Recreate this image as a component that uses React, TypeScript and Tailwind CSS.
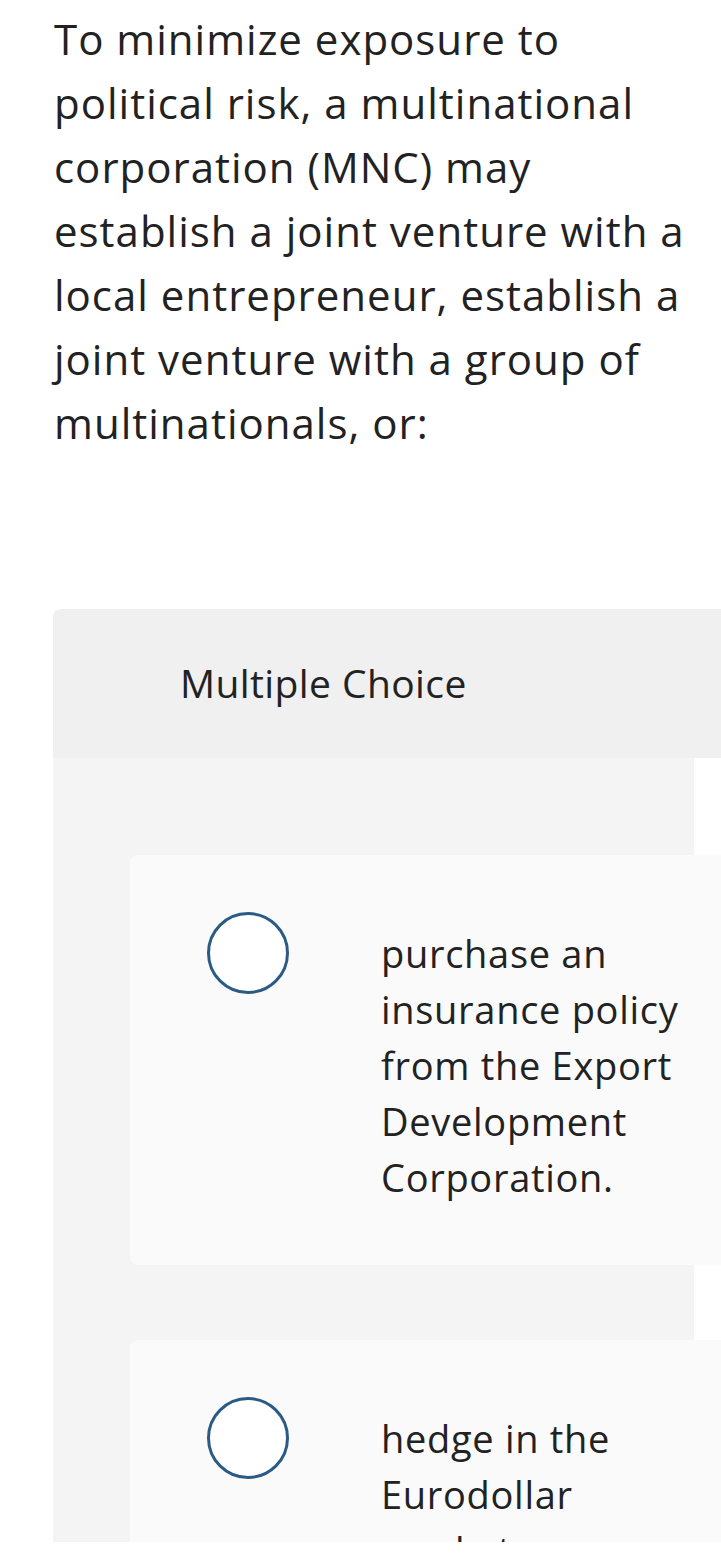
import React from 'react';

const font = { fontFamily: '"Open Sans", "Noto Sans", sans-serif' };

function Radio() {
  return (
    <div className="mt-[-3px] h-[82px] w-[82px] shrink-0 rounded-full border-[3px] border-[#2b5a84] bg-white" />
  );
}

function Option({ text }: { text: string }) {
  return (
    <div className="flex w-[640px] rounded-tl-lg rounded-bl-lg bg-[#fafafa] pl-[77px] pt-[60px] pb-[60px]">
      <Radio />
      <p className="ml-[92px] w-[320px] pt-[10px] text-[38px] leading-[56px] tracking-[0.7px] text-[#222]">{text}</p>
    </div>
  );
}

export default function App() {
  return (
    <div className="h-[1567px] w-[721px] overflow-hidden bg-white" style={font}>
      <div className="h-[1542px] overflow-hidden">
        <p className="w-[702px] pl-[54px] pt-[7px] text-[42px] leading-[64px] tracking-[1px] text-[#222]">
          To minimize exposure to political risk, a multinational corporation (MNC) may establish a joint venture with a local entrepreneur, establish a joint venture with a group of multinationals, or:
        </p>
        <div className="ml-[53px] mt-[154px] w-[720px] overflow-visible">
          <div className="flex h-[149px] items-center rounded-tl-lg bg-[#f0f0f0] pl-[127px]">
            <span className="text-[39px] tracking-[0.4px] text-[#222]">Multiple Choice</span>
          </div>
          <div className="flex w-[641px] flex-col gap-[75px] bg-[#f4f4f4] pl-[77px] pt-[97px] pb-[80px]">
            <Option text="purchase an insurance policy from the Export Development Corporation." />
            <Option text="hedge in the Eurodollar market." />
          </div>
        </div>
      </div>
    </div>
  );
}
